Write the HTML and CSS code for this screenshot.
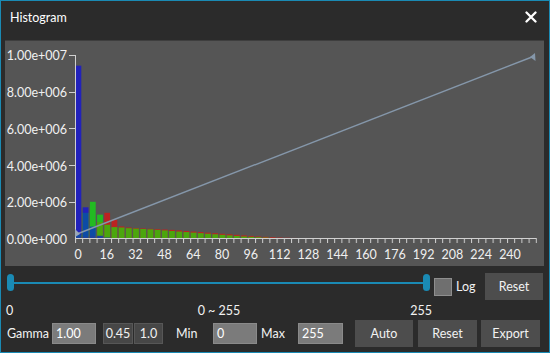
FILE: index.html
```html
<!DOCTYPE html>
<html lang="en">
<head>
    <meta charset="UTF-8"/>
    <title>Histogram</title>
    <link rel="stylesheet" href="styles.css">
</head>
<body>
<div class="window">
    <!-- title bar -->
    <div class="titlebar">
        <span class="title">Histogram</span>
        <svg class="close" width="12" height="12" viewBox="0 0 12 12">
            <path d="M1.5 1.5 L10.5 10.5 M10.5 1.5 L1.5 10.5" stroke="#fff" stroke-width="2.3" stroke-linecap="round"/>
        </svg>
    </div>

    <!-- chart -->
    <div class="chart">
        <svg id="plot" width="539" height="226" viewBox="5 40 539 226">
            <defs>
                <pattern id="ticks" x="75" y="238" width="7.2" height="6" patternUnits="userSpaceOnUse">
                    <rect x="0" y="0" width="1" height="6" fill="#d0d0d0"/>
                </pattern>
            </defs>
            <g id="bars"></g>

            <!-- axes -->
            <rect x="75" y="238" width="461" height="1" fill="#d0d0d0"/>
            <rect x="75" y="238" width="462" height="5" fill="url(#ticks)"/>
            <rect x="75" y="55" width="1" height="184" fill="#d0d0d0"/>
            <g class="ytick">
                <rect x="69" y="55" width="6" height="1"/>
                <rect x="69" y="92" width="6" height="1"/>
                <rect x="69" y="128" width="6" height="1"/>
                <rect x="69" y="165" width="6" height="1"/>
                <rect x="69" y="202" width="6" height="1"/>
            </g>
            <g class="ylabels">
                <text x="67" y="55">1.00e+007</text>
                <text x="67" y="92">8.00e+006</text>
                <text x="67" y="129">6.00e+006</text>
                <text x="67" y="166">4.00e+006</text>
                <text x="67" y="202">2.00e+006</text>
                <text x="67" y="239">0.00e+000</text>
            </g>
            <g class="xlabels" id="xlabels"></g>

            <!-- gamma curve -->
            <line x1="77" y1="234" x2="532" y2="57" stroke="#8597aa" stroke-width="1.4"/>
            <path d="M75 229 L80 234 L75 237 Z" fill="#9aa8b8"/>
            <path d="M530 57 L535 53 L535.5 61 Z" fill="#8597aa"/>
        </svg>
    </div>

    <!-- range slider -->
    <div class="range-row">
        <div class="slider">
            <div class="track"></div>
            <span class="thumb thumb-min"></span>
            <span class="thumb thumb-max"></span>
        </div>
        <span class="check"></span>
        <span class="log">Log</span>
        <button class="btn btn-top">Reset</button>
    </div>

    <div class="value-row">
        <span>0</span>
        <span>0 ~ 255</span>
        <span class="right">255</span>
    </div>

    <!-- gamma / min / max -->
    <div class="gamma-row">
        <span class="lbl lbl-gamma">Gamma</span>
        <span class="field f-gamma">1.00</span>
        <button class="small s-045">0.45</button>
        <button class="small s-10">1.0</button>
        <span class="lbl lbl-min">Min</span>
        <span class="field f-min">0</span>
        <span class="lbl lbl-max">Max</span>
        <span class="field f-max">255</span>
        <button class="btn b-auto">Auto</button>
        <button class="btn b-reset">Reset</button>
        <button class="btn b-export">Export</button>
    </div>
</div>

<script>
    // values in millions, one bar per 4 bins
    const RED = [0.1, 0.1, 0.15, 0.9, 1.4, 1.02, 0.66, 0.6, 0.57, 0.55, 0.53, 0.51, 0.49, 0.47, 0.44, 0.41,
        0.38, 0.35, 0.32, 0.29, 0.26, 0.23, 0.2, 0.17, 0.14, 0.11, 0.09, 0.07, 0.05, 0.04, 0.03, 0.02, 0.015];
    const GREEN = [0.2, 1.4, 2.0, 1.3, 0.75, 0.62, 0.6, 0.56, 0.54, 0.52, 0.5, 0.47, 0.44, 0.41, 0.38, 0.35,
        0.32, 0.29, 0.26, 0.23, 0.2, 0.17, 0.14, 0.11, 0.09, 0.07, 0.05, 0.03, 0.02, 0.01];
    const BLUE = [9.42, 1.7, 0.65, 0.15, 0.05];

    const ZERO_Y = 238.5;
    const PX_PER_M = 18.35;
    const NS = "http://www.w3.org/2000/svg";

    function drawChannel(values, color) {
        const g = document.getElementById("bars");
        values.forEach((v, i) => {
            const h = v * PX_PER_M;
            const r = document.createElementNS(NS, "rect");
            r.setAttribute("x", 75.5 + i * 7.2);
            r.setAttribute("y", ZERO_Y - h);
            r.setAttribute("width", 5.8);
            r.setAttribute("height", h);
            r.setAttribute("fill", color);
            r.setAttribute("fill-opacity", "0.6");
            g.appendChild(r);
        });
    }

    function drawXLabels() {
        const g = document.getElementById("xlabels");
        for (let v = 0; v <= 240; v += 16) {
            const t = document.createElementNS(NS, "text");
            t.setAttribute("x", 78 + v * 1.8);
            t.setAttribute("y", 254);
            t.textContent = v;
            g.appendChild(t);
        }
    }

    drawChannel(RED, "#ff0000");
    drawChannel(GREEN, "#00ff00");
    drawChannel(BLUE, "#0000ff");
    drawXLabels();
</script>
</body>
</html>
```

FILE: styles.css
```css
* {
    margin: 0;
    padding: 0;
    box-sizing: border-box;
}

body {
    background: #2b2b2b;
    font-family: Lato, "Noto Sans", sans-serif;
    font-size: 12.5px;
    color: #f2f2f2;
}

.window {
    width: 550px;
    height: 353px;
    border: 1px solid #1a8ab4;
    background: #2b2b2b;
}

/* title bar */
.titlebar {
    height: 39px;
    display: flex;
    align-items: center;
    justify-content: space-between;
    padding: 0 12px 7px 9px;
}

.title {
    font-size: 12.5px;
    color: #ffffff;
}

.close {
    display: block;
}

/* chart panel */
.chart {
    margin-left: 4px;
    width: 539px;
    height: 226px;
    background: #555555;
    border-top: 1px solid #3e3e3e;
}

.chart svg {
    display: block;
    margin-top: -1px;
}

.ytick rect {
    fill: #d0d0d0;
}

.ylabels text,
.xlabels text {
    fill: #f0f0f0;
    font-size: 12.5px;
    font-family: Lato, "Noto Sans", sans-serif;
    dominant-baseline: central;
}

.ylabels text {
    text-anchor: end;
}

.xlabels text {
    text-anchor: middle;
}

/* slider row */
.range-row {
    height: 34px;
    display: flex;
    align-items: center;
    padding: 7px 6px 0 6px;
}

.slider {
    position: relative;
    width: 424px;
    height: 18px;
    align-self: flex-start;
    margin-top: 1px;
}

.track {
    position: absolute;
    left: 3px;
    right: 3px;
    top: 8px;
    height: 2px;
    background: #1a8ab4;
}

.thumb {
    position: absolute;
    top: 0;
    width: 7px;
    height: 17px;
    border-radius: 4px;
    background: #1a8ab4;
}

.thumb-min {
    left: 0;
}

.thumb-max {
    right: 1px;
}

.check {
    width: 18px;
    height: 18px;
    margin-left: 3px;
    background: #6f6f6f;
    border: 1px solid #8e8e8e;
}

.log {
    margin-left: 4px;
}

.btn {
    height: 27px;
    background: #4d4d4d;
    border: none;
    color: #f2f2f2;
    font-family: inherit;
    font-size: 12.5px;
}

.btn-top {
    width: 58px;
    margin-left: auto;
}

/* value labels */
.value-row {
    height: 20px;
    width: 431px;
    display: grid;
    grid-template-columns: 1fr auto 1fr;
    align-items: center;
    padding-left: 5px;
}

.value-row .right {
    text-align: right;
}

/* bottom row */
.gamma-row {
    height: 27px;
    display: flex;
    align-items: center;
    padding-left: 6px;
}

.lbl-gamma {
    width: 45px;
}

.field {
    height: 21px;
    line-height: 19px;
    padding-left: 3px;
    background: #7b7b7b;
    border: 1px solid #8a8a8a;
    color: #ffffff;
}

.f-gamma {
    width: 44px;
}

.small {
    height: 21px;
    background: #474747;
    border: 1px solid #575757;
    color: #f2f2f2;
    font-family: inherit;
    font-size: 12.5px;
}

.s-045 {
    width: 30px;
    margin-left: 7px;
}

.s-10 {
    width: 29px;
    margin-left: 1px;
}

.lbl-min {
    width: 37px;
    margin-left: 13px;
}

.f-min {
    width: 44px;
}

.lbl-max {
    width: 37px;
    margin-left: 4px;
}

.f-max {
    width: 45px;
}

.b-auto {
    width: 58px;
    margin-left: 12px;
}

.b-reset {
    width: 59px;
    margin-left: 5px;
}

.b-export {
    width: 59px;
    margin-left: 4px;
}
```
